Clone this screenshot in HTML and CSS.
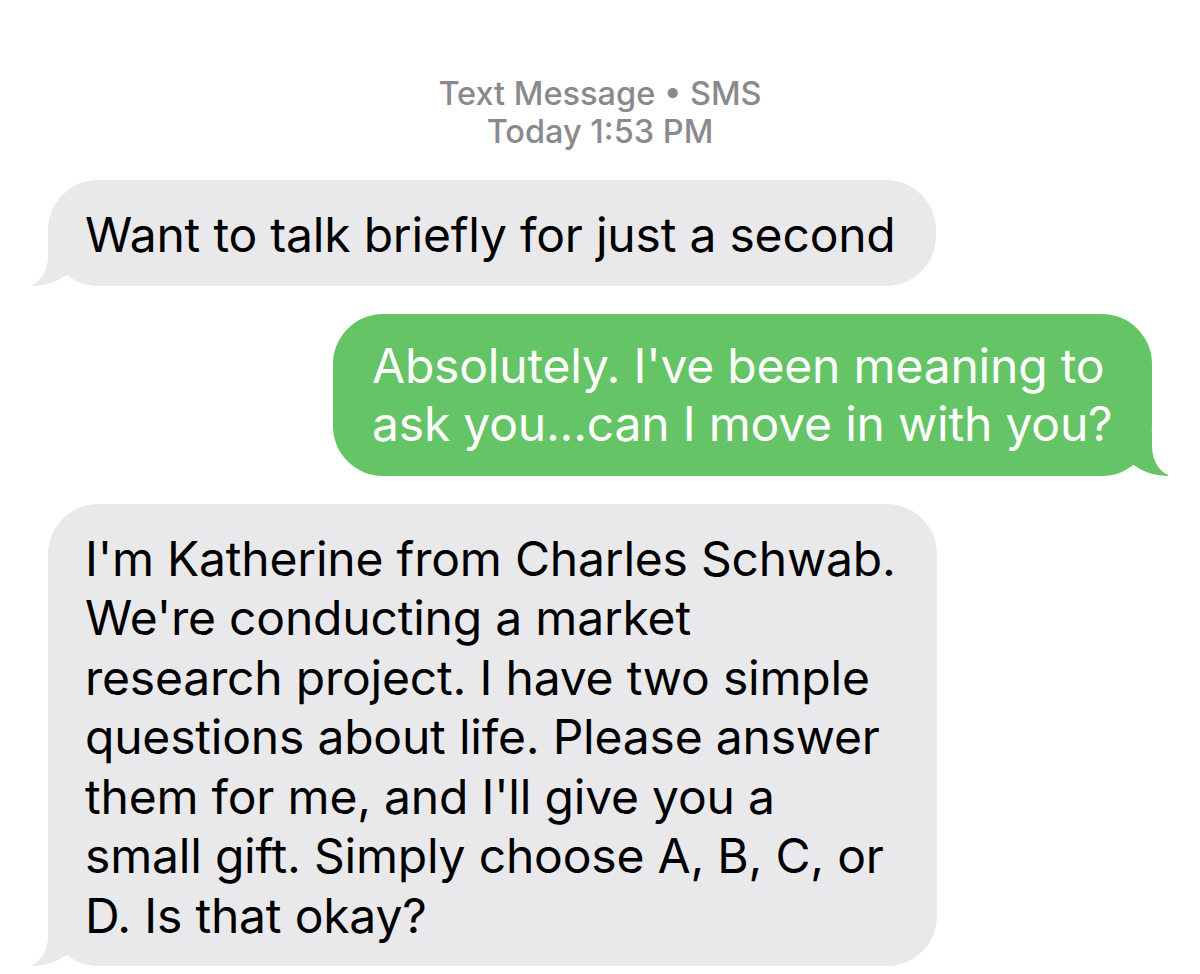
FILE: index.html
```html
<!DOCTYPE html>
<html lang="en">
<head>
<meta charset="utf-8">
<title>Messages</title>
<link rel="stylesheet" href="styles.css">
</head>
<body>
<main class="thread">
  <header class="meta">
    <div class="meta-line">Text Message • SMS</div>
    <div class="meta-line">Today 1:53 PM</div>
  </header>
  <div class="bubble them">Want to talk briefly for just a second</div>
  <div class="bubble me">Absolutely. I've been meaning to ask you...can I move in with you?</div>
  <div class="bubble them long">I'm Katherine from Charles Schwab. We're conducting a market research project. I have two simple questions about life. Please answer them for me, and I'll give you a small gift. Simply choose A, B, C, or D. Is that okay?</div>
</main>
</body>
</html>
```
FILE: styles.css
```css
html, body {
  margin: 0;
  padding: 0;
  background: #ffffff;
}

.thread {
  display: flex;
  flex-direction: column;
  gap: 28px;
  padding: 75px 48px 0 48px;
  font-family: Inter, "Liberation Sans", sans-serif;
}

.meta {
  display: flex;
  flex-direction: column;
  align-items: center;
  font-size: 32.5px;
  font-weight: 500;
  line-height: 38px;
  color: #8a8a8e;
  margin-bottom: 1px;
}

.bubble {
  position: relative;
  font-size: 48px;
  letter-spacing: -0.2px;
  border-radius: 50px;
  box-sizing: border-box;
}

.them {
  align-self: flex-start;
  max-width: 889px;
  background: #e9e9eb;
  color: #000000;
  line-height: 59.5px;
  padding: 25px 40px 21px 37px;
}

.me {
  align-self: flex-end;
  max-width: 819px;
  background: #65c466;
  color: #ffffff;
  line-height: 58px;
  padding: 23px 38px 23px 39px;
}

/* bubble tails */
.them::before,
.them::after,
.me::before,
.me::after {
  content: "";
  position: absolute;
  bottom: 0;
  height: 45px;
}

.them::before {
  left: -16px;
  width: 50px;
  background: #e9e9eb;
  border-bottom-right-radius: 50px 40px;
}

.them::after {
  left: -60px;
  width: 60px;
  background: #ffffff;
  border-bottom-right-radius: 22px 30px;
}

.me::before {
  right: -16px;
  width: 50px;
  background: #65c466;
  border-bottom-left-radius: 50px 40px;
}

.me::after {
  right: -60px;
  width: 60px;
  background: #ffffff;
  border-bottom-left-radius: 22px 30px;
}
```
